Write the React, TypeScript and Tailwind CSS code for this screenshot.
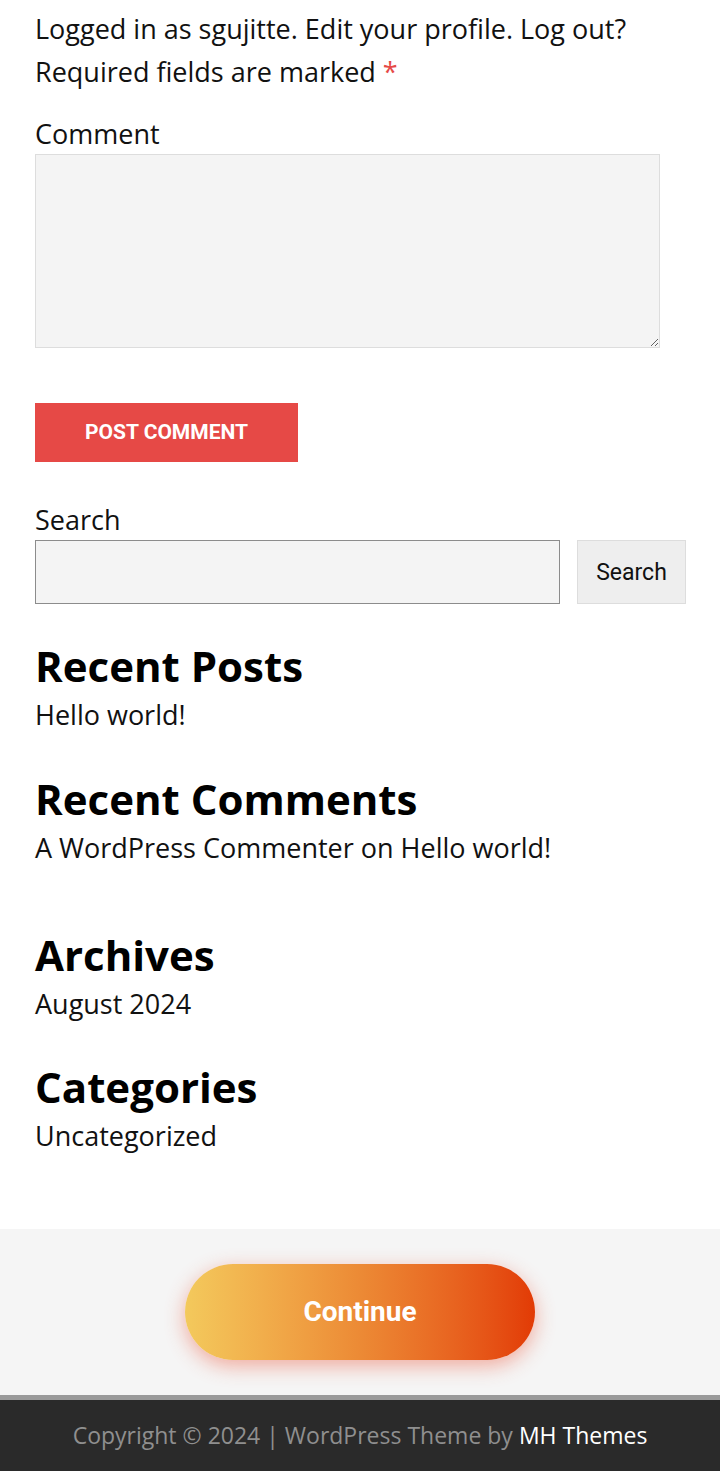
import React from 'react'

const sans = "font-['Open_Sans',sans-serif]"
const roboto = "font-['Roboto',sans-serif]"

function Widget({ title, children, className = '' }: { title: string; children: React.ReactNode; className?: string }) {
  return (
    <section className={className}>
      <h2 className={`${sans} text-[42px] font-bold leading-[48px] text-black`}>{title}</h2>
      <p className="text-[27px] leading-[43px] mt-[3px]">{children}</p>
    </section>
  )
}

export default function App() {
  return (
    <div className={`${sans} bg-white text-[#111] min-h-[1471px] flex flex-col`}>
      <main className="px-[35px] pt-[7px] pb-[72px] text-[27px] leading-[43px]">
        <p>Logged in as sgujitte. Edit your profile. Log out?</p>
        <p>
          Required fields are marked <span className="text-[#e64946]">*</span>
        </p>

        <label className="block mt-[22px] leading-[38px]">Comment</label>
        <textarea className="block w-[625px] h-[194px] bg-[#f4f4f4] border border-[#dddddd] mt-[1px]" />

        <button className={`${roboto} mt-[55px] w-[263px] h-[59px] bg-[#e64946] text-white text-[21px] font-bold uppercase leading-none`}>
          Post Comment
        </button>

        <label className="block mt-[40px] leading-[36px]">Search</label>
        <div className="flex items-stretch gap-[17px] mt-[2px]">
          <input className="shrink-0 w-[525px] h-[64px] bg-[#f4f4f4] border border-[#8c8c8c]" />
          <button className={`${roboto} shrink-0 w-[109px] h-[64px] bg-[#eeeeee] border border-[#dddddd] text-[23px] text-[#111]`}>
            Search
          </button>
        </div>

        <Widget title="Recent Posts" className="mt-[38px]">Hello world!</Widget>
        <Widget title="Recent Comments" className="mt-[39px]">A WordPress Commenter on Hello world!</Widget>
        <Widget title="Archives" className="mt-[62px]">August 2024</Widget>
        <Widget title="Categories" className="mt-[38px]">Uncategorized</Widget>
      </main>

      <div className="bg-[#f5f5f5] h-[166px] flex items-center justify-center">
        <button
          className={`${roboto} w-[350px] h-[96px] rounded-full bg-gradient-to-r from-[#f3c95c] via-[#ec8a35] to-[#e23a05] text-white text-[28px] font-bold shadow-[0_6px_20px_rgba(235,80,50,0.45)]`}
        >
          Continue
        </button>
      </div>

      <footer className="border-t-[5px] border-[#9a9a9a] bg-[#2a2a2a] flex-1 flex items-center justify-center text-[23px]">
        <p className="text-[#8f8f8f]">
          Copyright © 2024 | WordPress Theme by <span className="text-white">MH Themes</span>
        </p>
      </footer>
    </div>
  )
}
